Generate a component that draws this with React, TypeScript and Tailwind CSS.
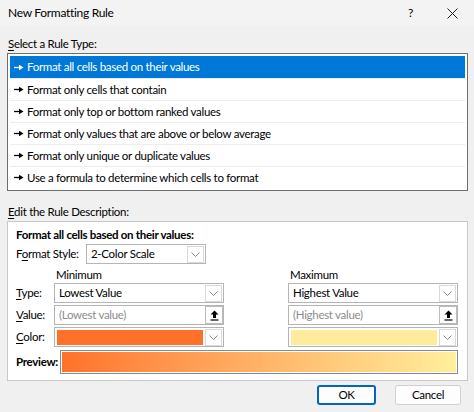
import React from 'react';

const rules = [
  'Format all cells based on their values',
  'Format only cells that contain',
  'Format only top or bottom ranked values',
  'Format only values that are above or below average',
  'Format only unique or duplicate values',
  'Use a formula to determine which cells to format',
];

const Arrow = ({ color }: { color: string }) => (
  <svg width="10" height="7" viewBox="0 0 10 7" className="shrink-0">
    <path d="M0 3.5h6" stroke={color} strokeWidth="1.3" />
    <path d="M5 0.8L9.5 3.5L5 6.2Z" fill={color} />
  </svg>
);

const Chevron = () => (
  <div className="w-[17px] h-[17px] mr-[1px] border border-[#d9d9d9] bg-white flex items-center justify-center">
    <svg width="9" height="5" viewBox="0 0 9 5">
      <path d="M0.5 0.5L4.5 4.5L8.5 0.5" stroke="#8a8a8a" strokeWidth="1" fill="none" />
    </svg>
  </div>
);

const UploadBtn = () => (
  <div className="w-[18px] h-[18px] border border-[#bcbcbc] bg-white flex items-center justify-center">
    <svg width="9" height="11" viewBox="0 0 9 11">
      <path d="M4.5 0.5L8.5 4.5H6V8H3V4.5H0.5Z" fill="#000" />
      <path d="M0.5 10h8" stroke="#000" strokeWidth="1.2" />
    </svg>
  </div>
);

const Dropdown = ({ text, className }: { text: string; className: string }) => (
  <div className={`h-[20px] border border-[#b4b4b4] bg-white flex items-center justify-between pl-[4px] ${className}`}>
    <span className="leading-none text-black">{text}</span>
    <Chevron />
  </div>
);

const Label = ({ acc, rest, className = '' }: { acc: string; rest: string; className?: string }) => (
  <span className={className}>
    <span className="underline underline-offset-2">{acc}</span>
    {rest}
  </span>
);

export default function App() {
  return (
    <div
      className="w-[474px] h-[412px] bg-[#f0f0f0] overflow-hidden text-[11.5px] tracking-[-0.3px] text-black flex flex-col"
      style={{ fontFamily: 'Lato, "Noto Sans", sans-serif' }}
    >
      {/* Title bar */}
      <div className="h-[26px] bg-[#f3f3f3] flex items-center pl-[8px] pr-[16px]">
        <span className="flex-1 text-[12px]">New Formatting Rule</span>
        <span className="mr-[34px] text-[12px]">?</span>
        <svg width="11" height="11" viewBox="0 0 11 11">
          <path d="M0.5 0.5L10.5 10.5M10.5 0.5L0.5 10.5" stroke="#222" strokeWidth="1" />
        </svg>
      </div>

      <div className="pl-[8px] pt-[10px] leading-[16px]">
        <Label acc="S" rest="elect a Rule Type:" />
      </div>

      {/* Rule type list */}
      <div className="ml-[7px] w-[461px] h-[138px] mt-[1px] border border-[#6e6e6e] bg-white p-[2px]">
        {rules.map((r, i) => (
          <div
            key={r}
            className={`h-[22px] flex items-center gap-[3px] pl-[4px] ${
              i === 0 ? 'bg-[#0078d7] text-white' : 'border-t border-[#ededed]'
            }`}
          >
            <Arrow color={i === 0 ? '#fff' : '#000'} />
            <span>{r}</span>
          </div>
        ))}
      </div>

      <div className="pl-[8px] mt-[13px] leading-[16px]">
        <Label acc="E" rest="dit the Rule Description:" />
      </div>

      {/* Description box */}
      <div className="ml-[7px] w-[461px] h-[160px] mt-[1px] border border-[#c8c8c8] bg-white pl-[8px] pt-[5px] flex flex-col">
        <div className="font-bold leading-[16px]">Format all cells based on their values:</div>
        <div className="flex items-center mt-[1px]">
          <span className="w-[70px]">
            F<span className="underline underline-offset-2">o</span>rmat Style:
          </span>
          <Dropdown text="2-Color Scale" className="w-[120px]" />
        </div>

        <div className="flex mt-[3px] leading-[16px]">
          <span className="ml-[40px] w-[234px]">Minimum</span>
          <span>Maximum</span>
        </div>

        <div className="flex flex-col gap-[2px]">
          <div className="flex items-center">
            <Label acc="T" rest="ype:" className="w-[38px]" />
            <Dropdown text="Lowest Value" className="w-[170px]" />
            <Dropdown text="Highest Value" className="w-[170px] ml-[64px]" />
          </div>
          <div className="flex items-center">
            <Label acc="V" rest="alue:" className="w-[38px]" />
            <div className="w-[170px] h-[20px] border border-[#b4b4b4] bg-white flex items-center justify-between pl-[4px]">
              <span className="text-[#8c8c8c]">(Lowest value)</span>
              <UploadBtn />
            </div>
            <div className="w-[170px] ml-[64px] h-[20px] border border-[#b4b4b4] bg-white flex items-center justify-between pl-[4px]">
              <span className="text-[#8c8c8c]">(Highest value)</span>
              <UploadBtn />
            </div>
          </div>
          <div className="flex items-center">
            <Label acc="C" rest="olor:" className="w-[38px]" />
            <div className="w-[170px] h-[20px] border border-[#b4b4b4] bg-white flex items-center justify-between pl-[2px]">
              <div className="h-[15px] flex-1 mr-[2px] bg-[#ff7128]" />
              <Chevron />
            </div>
            <div className="w-[170px] ml-[64px] h-[20px] border border-[#b4b4b4] bg-white flex items-center justify-between pl-[2px]">
              <div className="h-[15px] flex-1 mr-[2px] bg-[#ffeb9c]" />
              <Chevron />
            </div>
          </div>
        </div>

        <div className="flex items-center mt-[3px]">
          <span className="font-bold w-[44px] whitespace-nowrap">Preview:</span>
          <div className="w-[398px] h-[24px] border border-[#8a8a8a] bg-white p-[1px]">
            <div className="w-full h-full bg-gradient-to-r from-[#ff7128] to-[#ffef9c]" />
          </div>
        </div>
      </div>

      {/* Buttons */}
      <div className="flex justify-end gap-[19px] pr-[13px] mt-[4px]">
        <button className="w-[59px] h-[20px] rounded-[3px] border-2 border-[#0067c0] bg-[#fdfdfd] flex items-center justify-center">
          OK
        </button>
        <button className="w-[66px] h-[20px] rounded-[3px] border border-[#d0d0d0] bg-[#fdfdfd] flex items-center justify-center">
          Cancel
        </button>
      </div>
    </div>
  );
}
